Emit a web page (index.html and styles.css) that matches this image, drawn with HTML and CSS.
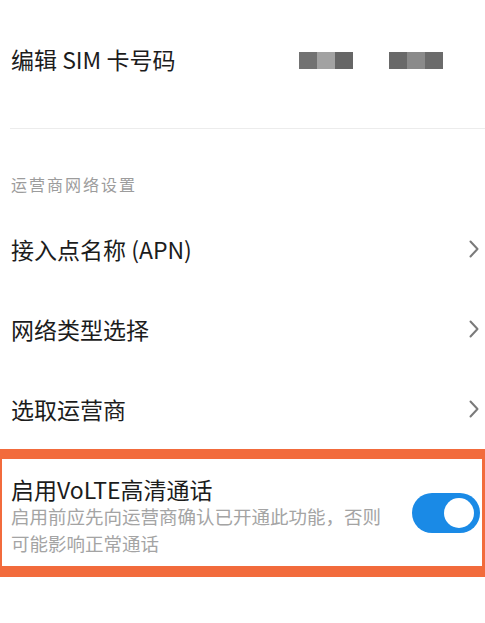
FILE: index.html
```html
<!DOCTYPE html>
<html lang="zh-CN">
<head>
<meta charset="utf-8">
<title>运营商网络设置</title>
<link rel="stylesheet" href="styles.css">
</head>
<body>
<div class="page">
  <div class="sim-row">
    <span class="title">编辑 SIM 卡号码</span>
    <div class="masks">
      <div class="mask">
        <span class="px p1"></span><span class="px p2"></span><span class="px p3"></span>
      </div>
      <div class="mask">
        <span class="px q1"></span><span class="px q2"></span><span class="px q3"></span>
      </div>
    </div>
  </div>
  <div class="divider"></div>

  <div class="section-header">运营商网络设置</div>

  <div class="item">
    <span class="title">接入点名称 (APN)</span>
    <svg class="chevron" viewBox="0 0 10 18" width="10" height="18"><path d="M1.5 1.5 L8.5 9 L1.5 16.5" fill="none" stroke="#7a7a7a" stroke-width="2" stroke-linecap="round" stroke-linejoin="round"/></svg>
  </div>
  <div class="item">
    <span class="title">网络类型选择</span>
    <svg class="chevron" viewBox="0 0 10 18" width="10" height="18"><path d="M1.5 1.5 L8.5 9 L1.5 16.5" fill="none" stroke="#7a7a7a" stroke-width="2" stroke-linecap="round" stroke-linejoin="round"/></svg>
  </div>
  <div class="item">
    <span class="title">选取运营商</span>
    <svg class="chevron" viewBox="0 0 10 18" width="10" height="18"><path d="M1.5 1.5 L8.5 9 L1.5 16.5" fill="none" stroke="#7a7a7a" stroke-width="2" stroke-linecap="round" stroke-linejoin="round"/></svg>
  </div>

  <div class="volte">
    <div class="volte-text">
      <div class="title">启用VoLTE高清通话</div>
      <div class="desc">启用前应先向运营商确认已开通此功能，否则可能影响正常通话</div>
    </div>
    <div class="toggle"><span class="knob"></span></div>
  </div>
</div>
</body>
</html>
```

FILE: styles.css
```css
html, body {
  margin: 0;
  padding: 0;
  background: #ffffff;
}

body {
  font-family: "Noto Sans CJK SC", "Noto Sans", "Liberation Sans", sans-serif;
  color: #1c1c1c;
}

.page {
  width: 485px;
  height: 623px;
  overflow: hidden;
}

.title {
  font-size: 23px;
  line-height: 28px;
  color: #1c1c1c;
  white-space: nowrap;
}

.sim-row {
  height: 118px;
  display: flex;
  align-items: center;
  padding-left: 11px;
}

.masks {
  margin-left: auto;
  margin-right: 42px;
  display: flex;
  gap: 36px;
  margin-top: 2px;
}

.mask {
  display: flex;
}

.px {
  width: 18px;
  height: 17px;
  display: block;
}

.p1 { background: #727272; }
.p2 { background: #a2a2a2; }
.p3 { background: #666666; }
.q1 { background: #696969; }
.q2 { background: #8a8a8a; }
.q3 { background: #6b6b6b; }

.divider {
  margin-top: 10px;
  margin-left: 10px;
  height: 1px;
  background: #ececec;
}

.section-header {
  margin-top: 44px;
  padding-left: 11px;
  font-size: 16px;
  line-height: 22px;
  letter-spacing: 2px;
  color: #9c9c9c;
  margin-bottom: 14px;
}

.item {
  height: 80px;
  display: flex;
  align-items: center;
  justify-content: space-between;
  padding-left: 11px;
  padding-right: 6px;
}

.chevron {
  display: block;
}

.volte {
  display: flex;
  align-items: flex-start;
  border-style: solid;
  border-color: #f26b3c;
  border-width: 10px 3px 11px 2px;
  padding: 17px 2px 9px 9px;
}

.volte-text {
  flex: 1;
  min-width: 0;
}

.volte .title {
  line-height: 27px;
}

.desc {
  font-size: 18.5px;
  line-height: 27px;
  color: #a4a4a4;
}

.toggle {
  margin-left: 14px;
  margin-top: 17px;
  width: 68px;
  height: 40px;
  border-radius: 20px;
  background: #1a8ae6;
  position: relative;
  flex-shrink: 0;
}

.knob {
  position: absolute;
  top: 5px;
  right: 6px;
  width: 30px;
  height: 30px;
  border-radius: 50%;
  background: #ffffff;
}
```
